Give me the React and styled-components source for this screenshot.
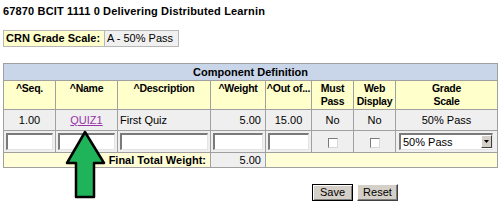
import React from "react";
import styled, { createGlobalStyle } from "styled-components";

const Global = createGlobalStyle`
  html, body { margin: 0; padding: 0; background: #ffffff; }
  body { font-family: "Liberation Sans", Arial, sans-serif; color: #000; }
`;

const Page = styled.div`
  position: relative;
  width: 500px;
  height: 204px;
  padding: 5px 3px 0 3px;
  box-sizing: border-box;
  overflow: hidden;
`;

const Title = styled.div`
  font-size: 11px;
  font-weight: bold;
  line-height: 12px;
  letter-spacing: 0.16px;
  white-space: nowrap;
`;

const ScaleBox = styled.div`
  display: inline-flex;
  margin-top: 13px;
  border: 1px solid #b8b8b8;
  font-size: 11px;
  line-height: 15px;
`;

const ScaleLabel = styled.span`
  background: #ffffcc;
  font-weight: bold;
  padding: 0 2px;
  border-right: 1px solid #b8b8b8;
  width: 101px;
  box-sizing: border-box;
`;

const ScaleValue = styled.span`
  background: #f0f0f0;
  padding: 0 2px;
  width: 73px;
  box-sizing: border-box;
`;

const Grid = styled.table`
  margin-top: 16px;
  width: 494px;
  border-collapse: collapse;
  table-layout: fixed;
  font-size: 11px;
  border: 1px solid #a0a0a0;
`;

const Caption = styled.th`
  background: #c9d6ea;
  height: 16px;
  padding: 0;
  font-weight: bold;
  text-align: center;
  border: 1px solid #a0a0a0;
`;

const HeadCell = styled.th`
  background: #ffffcc;
  vertical-align: top;
  text-align: center;
  font-weight: bold;
  font-size: 10.5px;
  letter-spacing: -0.25px;
  line-height: 13px;
  height: 27px;
  padding: 1px 0 0;
  border: 1px solid #a0a0a0;
  white-space: nowrap;
`;

const Cell = styled.td`
  background: ${(p) => (p.$tone === "yellow" ? "#fffed6" : "#efefef")};
  text-align: ${(p) => p.$align || "center"};
  font-weight: ${(p) => (p.$bold ? "bold" : "normal")};
  height: ${(p) => p.$h || 20}px;
  padding: 0 ${(p) => (p.$align === "right" ? 4 : 2)}px;
  border: 1px solid #a0a0a0;
  vertical-align: middle;
  white-space: nowrap;
  overflow: hidden;
`;

const InputCell = styled.td`
  background: #efefef;
  height: 21px;
  padding: 0 2px;
  border: 1px solid #a0a0a0;
  text-align: center;
  vertical-align: middle;
`;

const NameLink = styled.a`
  color: #9933aa;
  text-decoration: underline;
`;

const TextBox = styled.input`
  display: block;
  width: 100%;
  height: 17px;
  box-sizing: border-box;
  background: #fff;
  border-style: solid;
  border-width: 2px 1px 1px 2px;
  border-color: #7a7a7a #e4e4e4 #e4e4e4 #7a7a7a;
  margin: 0;
  padding: 0 2px;
  font: inherit;
`;

const Check = styled.input`
  appearance: none;
  display: inline-block;
  width: 10px;
  height: 10px;
  margin: 0;
  vertical-align: middle;
  background: #fff;
  border-style: solid;
  border-width: 1px;
  border-color: #7a7a7a #d8d8d8 #d8d8d8 #7a7a7a;
`;

const SelectWrap = styled.div`
  position: relative;
  width: 94px;
  height: 17px;
  margin-left: 1px;
`;

const Select = styled.select`
  appearance: none;
  display: block;
  width: 100%;
  height: 100%;
  box-sizing: border-box;
  margin: 0;
  padding: 0 0 0 2px;
  font: inherit;
  font-size: 11px;
  background: #fff;
  border-style: solid;
  border-width: 2px 1px 1px 2px;
  border-color: #7a7a7a #e4e4e4 #e4e4e4 #7a7a7a;
  color: #000;
`;

const DropButton = styled.span`
  position: absolute;
  right: 1px;
  top: 2px;
  width: 11px;
  height: 13px;
  box-sizing: border-box;
  background: #d4d0c8;
  border-style: solid;
  border-width: 1px;
  border-color: #ffffff #404040 #404040 #ffffff;
  display: flex;
  align-items: center;
  justify-content: center;
  pointer-events: none;
`;

const ButtonBar = styled.div`
  display: flex;
  gap: 4px;
  margin-top: 16px;
  padding-left: 309px;
`;

const Button = styled.button`
  font-family: "Liberation Sans", Arial, sans-serif;
  font-size: 11px;
  height: 17px;
  padding: 0 ${(p) => (p.$default ? 7 : 5)}px;
  background: #d4d0c8;
  color: #000;
  border-style: solid;
  border-width: 1px;
  border-color: ${(p) =>
    p.$default ? "#000 #000 #000 #000" : "#ffffff #404040 #404040 #ffffff"};
  box-shadow: ${(p) =>
    p.$default ? "inset 1px 1px 0 #fff, inset -1px -1px 0 #808080" : "inset -1px -1px 0 #808080"};
  line-height: 13px;
`;

const Arrow = styled.svg`
  position: absolute;
  left: 60px;
  top: 127px;
  width: 52px;
  height: 75px;
  overflow: visible;
`;

export default function App() {
  return (
    <>
      <Global />
      <Page>
        <Title>67870 BCIT 1111 0 Delivering Distributed Learnin</Title>
        <ScaleBox>
          <ScaleLabel>CRN Grade Scale:</ScaleLabel>
          <ScaleValue>A - 50% Pass</ScaleValue>
        </ScaleBox>
        <Grid>
          <colgroup>
            <col style={{ width: 52 }} />
            <col style={{ width: 62 }} />
            <col style={{ width: 93 }} />
            <col style={{ width: 55 }} />
            <col style={{ width: 46 }} />
            <col style={{ width: 42 }} />
            <col style={{ width: 42 }} />
            <col style={{ width: 102 }} />
          </colgroup>
          <thead>
            <tr>
              <Caption colSpan={8}>Component Definition</Caption>
            </tr>
            <tr>
              <HeadCell>^Seq.</HeadCell>
              <HeadCell>^Name</HeadCell>
              <HeadCell>^Description</HeadCell>
              <HeadCell>^Weight</HeadCell>
              <HeadCell>^Out of...</HeadCell>
              <HeadCell>Must<br />Pass</HeadCell>
              <HeadCell>Web<br />Display</HeadCell>
              <HeadCell>Grade<br />Scale</HeadCell>
            </tr>
          </thead>
          <tbody>
            <tr>
              <Cell>1.00</Cell>
              <Cell><NameLink href="#">QUIZ1</NameLink></Cell>
              <Cell $align="left">First Quiz</Cell>
              <Cell $align="right">5.00</Cell>
              <Cell>15.00</Cell>
              <Cell>No</Cell>
              <Cell>No</Cell>
              <Cell>50% Pass</Cell>
            </tr>
            <tr>
              <InputCell><TextBox /></InputCell>
              <InputCell><TextBox /></InputCell>
              <InputCell><TextBox /></InputCell>
              <InputCell><TextBox /></InputCell>
              <InputCell><TextBox /></InputCell>
              <InputCell><Check type="checkbox" /></InputCell>
              <InputCell><Check type="checkbox" /></InputCell>
              <InputCell>
                <SelectWrap>
                  <Select defaultValue="50">
                    <option value="50">50% Pass</option>
                  </Select>
                  <DropButton>
                    <svg width="5" height="3" viewBox="0 0 5 3">
                      <path d="M0 0h5L2.5 3z" fill="#000" />
                    </svg>
                  </DropButton>
                </SelectWrap>
              </InputCell>
            </tr>
            <tr>
              <Cell colSpan={3} $tone="yellow" $align="right" $bold $h={14}>
                Final Total Weight:
              </Cell>
              <Cell $align="right" $h={14}>5.00</Cell>
              <Cell colSpan={4} $tone="yellow" $h={14} />
            </tr>
          </tbody>
        </Grid>
        <ButtonBar>
          <Button $default>Save</Button>
          <Button>Reset</Button>
        </ButtonBar>
        <Arrow viewBox="0 0 52 75">
          <path
            d="M25 5 L44 36 L34 36 L34 70 L16 70 L16 36 L7 36 Z"
            fill="#1fb45a"
            stroke="#000"
            strokeWidth="2.5"
            strokeLinejoin="round"
          />
        </Arrow>
      </Page>
    </>
  );
}
